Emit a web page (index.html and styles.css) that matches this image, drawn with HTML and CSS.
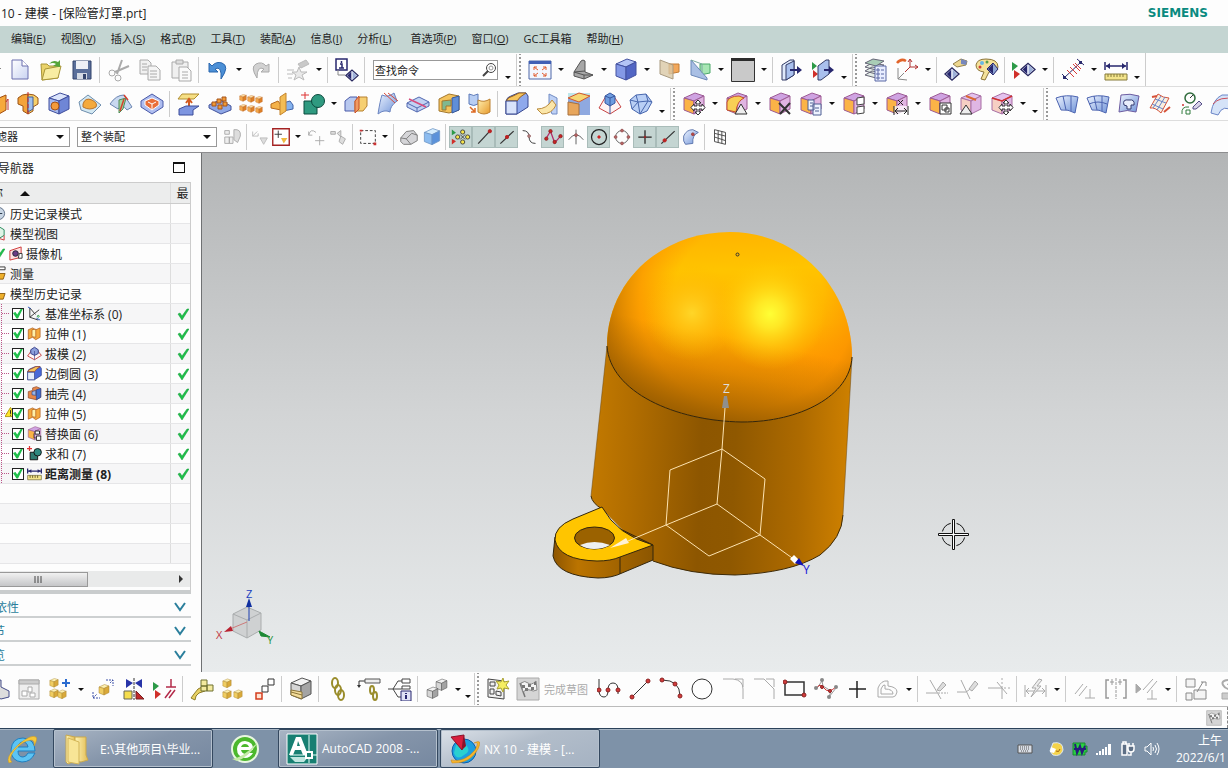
FILE: index.html
```html
<!DOCTYPE html>
<html lang="zh-CN">
<head>
  <meta charset="UTF-8" />
  <meta name="viewport" content="width=device-width, initial-scale=1.0" />
  <title>NX 10 - 建模</title>
  <link rel="stylesheet" href="styles.css">
</head>
<body>

  <!-- shared shapes and gradients -->
  <svg class="defs" aria-hidden="true">
    <defs>
      <linearGradient id="g-blue" x1="0" y1="0" x2="1" y2="1"><stop offset="0" stop-color="#eef4ff"/><stop offset="1" stop-color="#6f93d8"/></linearGradient>
      <linearGradient id="g-gold" x1="0" y1="0" x2="1" y2="1"><stop offset="0" stop-color="#fff0b0"/><stop offset="1" stop-color="#e79a2c"/></linearGradient>
      <linearGradient id="g-sheet" x1="0" y1="0" x2="1" y2="1"><stop offset="0" stop-color="#fff"/><stop offset="1" stop-color="#c9d3f2"/></linearGradient>
      <linearGradient id="g-folder" x1="0" y1="0" x2="1" y2="0"><stop offset="0" stop-color="#fdf3b4"/><stop offset="1" stop-color="#e3bd55"/></linearGradient>
    </defs>
    <symbol id="cube" viewBox="0 0 24 24">
      <path class="face-t" d="M2 6 13 1 22 4 12 9z"/>
      <path class="face-l" d="M2 6 12 9V22L2 18z"/>
      <path class="face-r" d="M12 9 22 4V17L12 22z"/>
    </symbol>
    <symbol id="tick" viewBox="0 0 12 12">
      <path d="M1 6 3 5 5 8 10 1 12 1 5 12z" fill="#1fbf4a" stroke="#0f9a35" stroke-width=".5"/>
    </symbol>
    <symbol id="move" viewBox="0 0 24 24">
      <path d="M16 8 19 11H17V14H20V12L23 15.500 20 19V17H17V20H19L16 23 13 20H15V17H12V19L9 15.500 12 12V14H15V11H13z" fill="#fff" stroke="#333"/>
    </symbol>
    <symbol id="play" viewBox="0 0 24 24">
      <path d="M2 4V13L8 8z" fill="#2c9a48" stroke="none"/>
      <path d="M4 12V21L10 16z" fill="#d0302a" stroke="none"/>
    </symbol>
    <symbol id="mark" viewBox="1 7 18 16">
      <path d="M2 15 10 8 18 15 10 22z" fill="#dfe4f5" stroke="#27275e" stroke-width="1.500"/>
      <path d="M9 10V20L4 15z" fill="#27276e" stroke="none"/>
      <path d="M11 10V20L16 15z" fill="#9db0d8" stroke="none"/>
    </symbol>
    <symbol id="flag" viewBox="0 0 24 24">
      <path d="M1 1H23V23H1z" fill="#d5d5d5" stroke="#aaa"/>
      <path d="M4 6 9 20" stroke="#777" stroke-width="1.500"/>
      <path d="M5 6Q9 3 12 6T20 4L21 13Q17 15 14 13T7 15z" fill="#f3f3f3" stroke="#888"/>
      <path d="M6 8H9V11H6zM12 7H15V10H12zM9 11H12V14H9zM15 10H18V13H15zM18 5H20V8H18z" fill="#777" stroke="none"/>
    </symbol>
    <symbol id="extrude" viewBox="0 0 24 24">
      <path d="M2 6 9 3 14 6 21 3V18L14 22 9 18 2 21z" fill="#f6a93c" stroke="#a34d10"/>
      <path d="M8 6 14 5V18L8 17z" fill="#fff0a8" stroke="#a34d10"/>
    </symbol>
  </svg>

  <header class="titlebar">
    <h1>10 - 建模 - [保险管灯罩.prt]</h1>
    <span class="brand">SIEMENS</span>
  </header>

  <nav class="menubar">
    <a href="#">编辑(<u>E</u>)</a>
    <a href="#">视图(<u>V</u>)</a>
    <a href="#">插入(<u>S</u>)</a>
    <a href="#">格式(<u>R</u>)</a>
    <a href="#">工具(<u>T</u>)</a>
    <a href="#">装配(<u>A</u>)</a>
    <a href="#">信息(<u>I</u>)</a>
    <a href="#">分析(<u>L</u>)</a>
    <a href="#" class="wide">首选项(<u>P</u>)</a>
    <a href="#">窗口(<u>O</u>)</a>
    <a href="#">GC工具箱</a>
    <a href="#">帮助(<u>H</u>)</a>
  </nav>

  <!-- standard / view toolbars -->
  <div class="toolbar standard">
    <button class="dd" aria-label="开始"></button>
    <button class="tb" aria-label="新建"><svg viewBox="0 0 24 24"><path d="M4 2H14L20 8V21H4z" fill="url(#g-sheet)" stroke="#6a6fae"/><path d="M14 2V8H20" fill="#fff" stroke="#6a6fae"/></svg></button>
    <button class="tb" aria-label="打开"><svg viewBox="0 0 24 24"><path d="M2 6H8L10 8H19V20L3 22z" fill="#ead36a" stroke="#a99638"/><path d="M6 11 22 8 19 20 3 22z" fill="#f8eda2" stroke="#a99638"/><path d="M10 6Q14 1 19 4L21 2V9L14 8 17 6Q14 4 10 6z" fill="#56a53b" stroke="none"/></svg></button>
    <button class="tb" aria-label="保存"><svg viewBox="0 0 24 24"><path d="M3 3H21V21H3z" fill="#5a6f9a" stroke="#33456d"/><path d="M6 3H18V11H6z" fill="#eef0f5"/><path d="M7 15H17V21H7z" fill="#d4dae4"/><path d="M13 16H16V21H13z" fill="#33456d"/></svg></button>
    <i class="sep"></i>
    <button class="tb" aria-label="剪切"><svg viewBox="0 0 24 24" stroke="#aaa"><path d="M15 2 10 16M22 8 8 14" stroke-width="2"/><circle cx="5" cy="15" r="3"/><circle cx="11" cy="20" r="3"/></svg></button>
    <button class="tb" aria-label="复制"><svg viewBox="0 0 24 24" stroke="#aaa"><path d="M2 2H10L13 5V16H2z" fill="#f1f1f1"/><path d="M10 8H18L22 12V22H10z" fill="#f5f5f5"/><path d="M4 6H9M4 9H9M4 12H9M12 13H19M12 16H19M12 19H19"/></svg></button>
    <button class="tb" aria-label="粘贴"><svg viewBox="0 0 24 24" stroke="#aaa"><path d="M3 4H19V20H3z" fill="#f0f0f0"/><path d="M7 2H14V6H7z" fill="#ddd"/><path d="M10 9H18L22 13V23H10z" fill="#fafafa"/><path d="M13 14H19M13 17H19M13 20H19"/></svg></button>
    <i class="sep"></i>
    <button class="tb" aria-label="撤消"><svg viewBox="0 0 24 24"><path d="M3 5V14H12L9 11Q16 7 15 21Q24 8 16 5Q10 3 6 8z" fill="#4b8fd6" stroke="#2a66ad"/></svg></button>
    <button class="dd" aria-label="撤消列表"></button>
    <button class="tb" aria-label="重做"><svg viewBox="0 0 24 24"><path d="M20 6V14H12L15 11Q8 7 8 20Q1 9 7 6Q13 3 17 8z" fill="#d2d2d2" stroke="#aaa"/></svg></button>
    <i class="sep"></i>
    <button class="tb" aria-label="重复命令"><svg viewBox="0 0 24 24" stroke="#bbb"><path d="M12 6 20 2 23 6 15 10z" fill="#c9c9c9"/><path d="M1 12H8M1 16H7M2 20H6"/><path d="M13 9 15 14 21 14 16 17 18 22 13 19 8 22 10 17 6 14H11z" fill="#e9e9e9"/></svg></button>
    <button class="dd" aria-label="重复命令列表"></button>
    <i class="sep"></i>
    <button class="tb" aria-label="命令信息"><svg viewBox="0 0 24 24"><path d="M1 1H12V12H1z" fill="#fff" stroke="#27276e" stroke-width="1.500"/><path d="M6.500 3V5M5 6H7V10M4 10H9" stroke="#27276e" stroke-width="1.500"/><path d="M3 12V17H10" stroke="#888"/><use href="#mark" x="10" y="11" width="14" height="13"/></svg></button>
    <i class="sep"></i>
    <label class="finder"><input type="text" value="查找命令" aria-label="查找命令"><svg viewBox="0 0 16 16" stroke="#444"><circle cx="10" cy="6" r="4.500"/><circle cx="10" cy="6" r="2" stroke="#999"/><path d="M7 9 2 14" stroke-width="2"/></svg></label>
    <button class="dd low" aria-label="工具条选项"></button>
    <i class="grip"></i>
    <button class="tb" aria-label="适合窗口"><svg viewBox="0 0 24 24"><path d="M1 3H23V21H1z" fill="#f3f6fd" stroke="#4c66a8"/><path d="M1 3H23V6H1z" fill="#3f5fb5" stroke="none"/><path d="M6 12V9H9M15 9H18V12M6 15V18H9M15 18H18V15M6 9 10 12M18 9 14 12M6 18 10 15M18 18 14 15" stroke="#e05a2c"/></svg></button>
    <button class="dd" aria-label="适合窗口列表"></button>
    <button class="tb" aria-label="渲染样式"><svg viewBox="0 0 24 24"><path d="M3 14 10 3Q12 1 14 3V14L22 17 13 21 3 18z" fill="#a7a7a7" stroke="#555"/><path d="M3 14 13 17 22 17M13 17V21M3 14 14 13" stroke="#555"/></svg></button>
    <button class="dd" aria-label="渲染样式列表"></button>
    <button class="tb" aria-label="定向视图"><svg viewBox="0 0 24 24" class="c-solid"><use href="#cube"/></svg></button>
    <button class="dd" aria-label="定向视图列表"></button>
    <button class="tb" aria-label="编辑截面"><svg viewBox="0 0 24 24"><path d="M12 6H22V14L12 16z" fill="#f2a75a" stroke="#c27d35"/><path d="M3 2 16 7V21L3 16z" fill="#d9c8a5" fill-opacity=".8" stroke="#a99a80"/></svg></button>
    <button class="tb" aria-label="剪切截面"><svg viewBox="0 0 24 24"><path d="M12 6H22V15L12 17z" fill="#a7e6b4" stroke="#4ba869"/><path d="M3 2 19 20V22L3 17z" fill="#a9bfe4" stroke="#6b88b8"/><path d="M3 2 14 6V15" stroke="#7aa9a0"/></svg></button>
    <button class="dd" aria-label="截面列表"></button>
    <button class="tb" aria-label="背景"><svg viewBox="0 0 24 24"><path d="M.500 .500H23.500V23.500H.500z" fill="#c9c9c9" stroke="#333"/><path d="M0 0H24V3H0z" fill="#2c2c2c" stroke="none"/></svg></button>
    <button class="dd" aria-label="背景列表"></button>
    <i class="sep"></i>
    <button class="tb" aria-label="显示"><svg viewBox="0 0 24 24"><path d="M2 7 10 2H14V17L6 22H2z" fill="#dfe9fb" stroke="#333b66"/><path d="M6 7 14 3V17L6 22z" fill="#a9c0ee" stroke="#333b66"/><path d="M10 12H18" stroke="#27276e" stroke-width="2"/><path d="M17 8 22 12 17 16z" fill="#27276e" stroke="none"/></svg></button>
    <button class="tb" aria-label="隐藏"><svg viewBox="0 0 24 24"><path d="M1 4V12L6 8z" fill="#2c9a48"/><path d="M2 12V20L7 16z" fill="#d0302a"/><path d="M7 8 15 2H18V16L10 22H7z" fill="#a9c0ee" stroke="#333b66"/><path d="M13 12H19" stroke="#27276e" stroke-width="2"/><path d="M18 8 23 12 18 16z" fill="#27276e" stroke="none"/></svg></button>
    <button class="dd low" aria-label="工具条选项"></button>
    <i class="grip"></i>
    <button class="tb" aria-label="图层设置"><svg viewBox="0 0 24 24" stroke="#667"><path d="M1 17 8 13 20 15 12 20zM1 13 8 9 20 11 12 16zM1 9 8 5 20 7 12 12z" fill="#e3ece6"/><path d="M1 5 9 1 20 3 12 8z" fill="#a9cdb6"/><path d="M11 8H22V23H11z" fill="#e8edff" stroke="#5b68a4"/><path d="M13 11H15V13H13zM13 15H15V17H13zM13 19H15V21H13zM17 12H20M17 16H20M17 20H20" stroke="#5b68a4"/></svg></button>
    <button class="tb" aria-label="工作坐标系"><svg viewBox="0 0 24 24"><path d="M2 5Q6 0 11 3" stroke="#e2652b" stroke-width="2.500"/><path d="M3 10V21L12 22M3 21 9 15" stroke="#888"/><path d="M15 2V9H23M15 9 10 14" stroke="#b03030"/><path d="M13 4 15 1 17 4M20 7 23 9 20 11" stroke="#b03030"/></svg></button>
    <button class="dd" aria-label="工作坐标系列表"></button>
    <i class="sep"></i>
    <button class="tb" aria-label="对象显示"><svg viewBox="0 0 24 24"><path d="M9 6 17 1 23 3 22 7 13 9z" fill="#edd68d" stroke="#93814d"/><path d="M17 1 23 3 22 7 17 6z" fill="#7687bd"/><use href="#mark" x="0" y="9" width="16" height="14"/></svg></button>
    <button class="tb" aria-label="编辑显示"><svg viewBox="0 0 24 24"><path d="M11 1Q23 1 23 9 22 15 14 14L10 22 6 21 9 14Q1 13 1 7 2 1 11 1z" fill="#f5e29a" stroke="#8b7437"/><circle cx="7" cy="5" r="2" fill="#68b8e6"/><circle cx="12" cy="4" r="1.500" fill="#5b9c4a"/><circle cx="5" cy="9" r="1.500" fill="#cf4035"/><path d="M18 5 23 11 18 17 12 11z" fill="#8fa6d4" stroke="#27276e"/><path d="M18 6V16L13 11z" fill="#27276e"/></svg></button>
    <i class="sep"></i>
    <button class="tb" aria-label="隐藏显示"><svg viewBox="0 0 24 24"><use href="#play" x="-2"/><use href="#mark" x="8" y="4" width="16" height="15"/></svg></button>
    <button class="dd" aria-label="隐藏显示列表"></button>
    <i class="sep"></i>
    <button class="tb" aria-label="测量距离"><svg viewBox="0 0 24 24"><path d="M3 20 20 4" stroke="#2b2b6e"/><path d="M6 12 13 19M9 9 16 16M12 6 19 13M14 5 20 11" stroke="#d83a3a"/><path d="M1 16 7 22M16 1 23 7" stroke="#2b2b6e"/><path d="M2 18H5V21H2zM18 3H21V6H18z" fill="#2b2b6e" stroke="none"/></svg></button>
    <button class="dd" aria-label="测量列表"></button>
    <button class="tb" aria-label="尺"><svg viewBox="0 0 24 24"><path d="M1 4V12M23 4V12M2 8H22" stroke="#27276e" stroke-width="1.500"/><path d="M2 8 6 5V11zM22 8 18 5V11z" fill="#27276e" stroke="none"/><path d="M1 16H23V22H1z" fill="#f3e48b" stroke="#857b3a"/><path d="M4 16V19M7 16V19M10 16V19M13 16V19M16 16V19M19 16V19" stroke="#857b3a"/></svg></button>
    <button class="dd low" aria-label="工具条选项"></button>
    <i class="edge"></i>
  </div>

  <!-- feature / synchronous modelling toolbars -->
  <div class="toolbar feature">
    <button class="tb" aria-label="拉伸"><svg viewBox="0 0 24 24"><use href="#extrude"/><path d="M23 7V18M21 10 23 7" stroke="#c03030"/></svg></button>
    <button class="tb" aria-label="旋转"><svg viewBox="0 0 24 24"><path d="M2 6Q6 2 12 2V22L7 19V14L2 12z" fill="#f3a33a" stroke="#9a5518"/><path d="M12 2Q19 2 22 6V12L17 15V19L12 22z" fill="#f6d06a" stroke="#9a5518"/><path d="M12 5H17V17L12 20z" fill="#9fc0ee" stroke="#455d94"/><path d="M12 0V24" stroke="#c33" stroke-dasharray="4 2"/></svg></button>
    <button class="tb" aria-label="孔"><svg viewBox="0 0 24 24" class="c-blue"><use href="#cube"/><circle cx="8" cy="14" r="4" fill="#f39b3b" stroke="#a2521a"/></svg></button>
    <button class="tb" aria-label="凸起"><svg viewBox="0 0 24 24"><path d="M1 10 10 3 23 13 14 22 3 18z" fill="#d3e8f2" stroke="#6f8fae"/><path d="M5 12Q7 5 14 8 20 11 18 15 12 19 5 15z" fill="#f4aa3c" stroke="#b7732c"/></svg></button>
    <button class="tb" aria-label="规律延伸"><svg viewBox="0 0 24 24"><path d="M1 12Q7 3 15 3L23 15 18 18Q13 11 9 17z" fill="#c8d8f0" stroke="#6b85b1"/><path d="M10 8 17 6 14 17 10 21z" fill="#a4d3a0" stroke="#4e8c58"/><path d="M15 3 19 8M11 19 15 7" stroke="#d6402f" stroke-width="1.500"/></svg></button>
    <button class="tb" aria-label="凸台"><svg viewBox="0 0 24 24"><path d="M1 9 12 2 23 9V15L12 22 1 15z" fill="#aebdf0" stroke="#4a5aa8"/><path d="M5 9 12 6 19 9V13L12 18 5 13z" fill="#ea6f3a" stroke="#fff"/><path d="M8 10 12 12 16 10M12 12V17" stroke="#fff"/></svg></button>
    <i class="sep"></i>
    <button class="tb" aria-label="抽取几何体"><svg viewBox="0 0 24 24"><path d="M5 2H22L17 7H1z" fill="#f6df84" stroke="#b08e31"/><path d="M12 17V8M9 11 12 7 15 11" stroke="#d35a1e" stroke-width="2"/><path d="M2 17 9 14H22L16 18V23H2z" fill="#7e95e0" stroke="#3d4d9a"/></svg></button>
    <button class="tb" aria-label="阵列特征"><svg viewBox="0 0 24 24"><path d="M1 13 12 8 23 14V18L13 22 1 16z" fill="#8ea7e6" stroke="#44549c"/><path d="M4 10H8V14H4zM9 7H13V11H9zM14 5H18V9H14zM10 13H14V17H10zM15 10H19V14H15z" fill="#f29a35" stroke="#a4551d"/></svg></button>
    <button class="tb" aria-label="阵列几何"><svg viewBox="0 0 24 24" class="c-gold"><use href="#cube" x="0" y="2" width="8" height="8"/><use href="#cube" x="8" y="3" width="8" height="8"/><use href="#cube" x="16" y="4" width="8" height="8"/><use href="#cube" x="0" y="12" width="8" height="8"/><use href="#cube" x="8" y="13" width="8" height="8"/><use href="#cube" x="16" y="14" width="8" height="8"/></svg></button>
    <button class="tb" aria-label="镜像特征"><svg viewBox="0 0 24 24"><path d="M1 12 8 9 11 13V18L1 16z" fill="#f4b24a" stroke="#b56a1e"/><path d="M13 11 20 9 23 13V17L13 19z" fill="#86b3ee" stroke="#3f62a8"/><path d="M10 5 16 1V19L10 23z" fill="#f3bd55" stroke="#c4832a"/></svg></button>
    <button class="tb" aria-label="求和"><svg viewBox="0 0 24 24" stroke="#0d4a3e"><path d="M4 0V7M0 3H8" stroke="#d33"/><path d="M3 9H16V22H3z" fill="#2f9a80"/><circle cx="17" cy="9" r="6.500" fill="#2f9a80"/></svg></button>
    <button class="dd" aria-label="求和列表"></button>
    <button class="tb" aria-label="修剪体"><svg viewBox="0 0 24 24"><path d="M1 9 6 5H13V19H1z" fill="#b8c8ef" stroke="#4a5aa8"/><path d="M11 9 16 5H23V14L19 19H11z" fill="#f6cf72" stroke="#b78130"/><path d="M11 9V21L15 17V4z" fill="#f09a62" stroke="#c7522b"/></svg></button>
    <button class="tb" aria-label="拆分体"><svg viewBox="0 0 24 24"><path d="M7 3Q13 6 19 1L22 9Q15 14 15 20 9 17 3 22 5 9 7 3z" fill="url(#g-blue)" stroke="#6b85c1"/><path d="M9 1 20 11M13 1 23 9" stroke="#d64b3d"/></svg></button>
    <button class="tb" aria-label="修剪片体"><svg viewBox="0 0 24 24"><path d="M1 11 13 5 23 10V14L11 20 1 15z" fill="#c1d2f3" stroke="#5268b0"/><path d="M1 11 11 16 23 10M11 16V20" stroke="#5268b0"/><path d="M3 7 20 15" stroke="#d64b7d" stroke-width="1.500"/></svg></button>
    <button class="tb" aria-label="抽壳"><svg viewBox="0 0 24 24"><path d="M2 7 12 2 22 4V18L12 21 2 19z" fill="#f4c35c" stroke="#a3782e"/><path d="M15 6 22 4V18L15 21z" fill="#5f8ed8" stroke="#34589e"/><path d="M5 9 14 8V14L9 14V18H5z" fill="#7fb890" stroke="#a3782e"/></svg></button>
    <button class="tb" aria-label="加厚"><svg viewBox="0 0 24 24"><path d="M1 2Q6 5 10 2V12Q6 15 1 12z" fill="#b7cdf3" stroke="#5b78b8"/><path d="M10 8Q16 11 22 7V20Q16 24 10 20z" fill="url(#g-gold)" stroke="#bd8130"/><path d="M2 15 7 20M7 16V20H3" stroke="#dd6b25" stroke-width="1.500"/></svg></button>
    <i class="sep"></i>
    <button class="tb" aria-label="边倒圆"><svg viewBox="0 0 24 24"><path d="M1 9Q2 5 6 4L13 1H21L23 4V15L12 22H1z" fill="#8fa9ec" stroke="#37478f"/><path d="M1 9Q3 5 8 4L14 1H21Q14 5 12 9z" fill="#f6c55c" stroke="#99601c"/><path d="M1 9H12V22H1z" fill="#d8e3fb" stroke="#37478f"/></svg></button>
    <button class="tb" aria-label="面倒圆"><svg viewBox="0 0 24 24"><path d="M13 2 21 6V22H16L13 14z" fill="#bdd0f5" stroke="#728cc4"/><path d="M1 17Q11 17 16 8L20 13Q16 22 6 22z" fill="#fbe6a8" stroke="#bb8b3c"/></svg></button>
    <button class="tb" aria-label="倒斜角"><svg viewBox="0 0 24 24"><path d="M1 1H23V23H1z" fill="#bfe7ea" stroke="none"/><path d="M1 7 10 2 23 5V23H1z" fill="#8fa9e0" stroke="none"/><path d="M1 6 12 1 23 4 12 10z" fill="#f6d774" stroke="#d2562f"/><path d="M1 10 12 12V23H1z" fill="#e8a65c" stroke="#a8713c"/></svg></button>
    <button class="tb" aria-label="拔模"><svg viewBox="0 0 24 24"><path d="M8 4 1 16 12 22 23 15 15 3" fill="#fff4f4" stroke="#c74545"/><path d="M7 4 12 1 17 4V11L12 14 7 11z" fill="#6f9de0" stroke="#3858a0"/><path d="M7 4 12 6 17 4M12 6V22" stroke="#3858a0"/></svg></button>
    <button class="tb" aria-label="体"><svg viewBox="0 0 24 24"><path d="M7 3 17 2 23 10 18 19 11 22 3 17 1 8z" fill="#b9cff5" stroke="#4867ae"/><path d="M7 3 9 10 1 8M9 10 19 9 17 2M19 9 23 10M9 10 11 22 19 9M3 17 9 10" stroke="#4867ae"/></svg></button>
    <button class="dd low" aria-label="工具条选项"></button>
    <i class="grip"></i>
    <button class="tb" aria-label="移动面"><svg viewBox="0 0 24 24" class="c-sync"><use href="#cube"/><use href="#move"/></svg></button>
    <button class="dd" aria-label="移动面列表"></button>
    <button class="tb" aria-label="调整圆角"><svg viewBox="0 0 24 24" class="c-sync"><use href="#cube"/><path d="M2 18V10Q4 4 14 4L19 6Q12 9 11 20z" fill="#f8cf55" stroke="#c4502f"/><path d="M16 12 22 22H10z" fill="#eee" stroke="#333"/></svg></button>
    <button class="dd" aria-label="调整圆角列表"></button>
    <button class="tb" aria-label="删除面"><svg viewBox="0 0 24 24" class="c-sync"><use href="#cube"/><path d="M11 11 22 22M22 11 12 22" stroke="#333" stroke-width="2"/></svg></button>
    <button class="tb" aria-label="复制面"><svg viewBox="0 0 24 24" class="c-sync"><use href="#cube"/><path d="M9 8H15V18H9zM14 12H22V23H14z" fill="#eef3ff" stroke="#4e5e93"/><path d="M11 11H14M11 14H14M16 16H20M16 19H20" stroke="#4e5e93"/></svg></button>
    <button class="dd" aria-label="复制面列表"></button>
    <button class="tb" aria-label="组合面"><svg viewBox="0 0 24 24" class="c-sync"><use href="#cube"/><path d="M15 6 22 5V12L15 13zM15 15 22 14V21L15 22z" fill="#fff" stroke="#444"/></svg></button>
    <button class="dd" aria-label="组合面列表"></button>
    <button class="tb" aria-label="线性尺寸"><svg viewBox="0 0 24 24" class="c-sync"><use href="#cube"/><path d="M9 14H24V24H9z" fill="#fff" fill-opacity=".7"/><path d="M9 14V23M23 14V23M10 19H22M13 16 10 19 13 22M19 16 22 19 19 22" stroke="#222"/><path d="M13 8 18 13M18 8 13 13" stroke="#222"/></svg></button>
    <button class="dd" aria-label="线性尺寸列表"></button>
    <button class="tb" aria-label="组"><svg viewBox="0 0 24 24" class="c-sync"><use href="#cube"/><path d="M12 11H23V22H12z" fill="#fff" stroke="#333"/><path d="M14 13H19V18H14zM17 16H21V20H17z" stroke="#333"/></svg></button>
    <button class="tb" aria-label="优化面"><svg viewBox="0 0 24 24" class="c-pink"><use href="#cube"/><path d="M7 4 17 8" stroke="#db6a34" stroke-width="2"/><path d="M7 13 13 22H1z" fill="#eee" stroke="#333"/></svg></button>
    <button class="tb" aria-label="移动边"><svg viewBox="0 0 24 24" class="c-pink"><use href="#cube"/><path d="M2 6 12 9 22 4" stroke="#d03131" stroke-width="1.500"/><use href="#move"/></svg></button>
    <button class="dd" aria-label="移动边列表"></button>
    <button class="dd low" aria-label="工具条选项"></button>
    <i class="grip"></i>
    <button class="tb" aria-label="通过曲线组"><svg viewBox="0 0 24 24"><path d="M1 6Q11 2 23 5L20 21Q13 17 6 18z" fill="url(#g-blue)" stroke="#4b63b0"/><path d="M8 4 11 18M16 4V19" stroke="#4b63b0"/></svg></button>
    <button class="tb" aria-label="通过曲线网格"><svg viewBox="0 0 24 24"><path d="M1 6Q11 2 23 5L20 21Q13 17 6 18z" fill="url(#g-blue)" stroke="#4b63b0"/><path d="M8 4 11 18M16 4V19M3 12Q12 8 21 12" stroke="#4b63b0"/></svg></button>
    <button class="tb" aria-label="N边曲面"><svg viewBox="0 0 24 24"><path d="M4 3Q13 1 22 4L19 20Q10 17 2 20z" fill="url(#g-blue)" stroke="#6b5ba0"/><path d="M7 13Q5 7 12 8 18 7 17 13L14 13V17H10V14z" fill="#e9eefc" stroke="#333a70"/></svg></button>
    <button class="tb" aria-label="X型"><svg viewBox="0 0 24 24"><path d="M10 2Q15 6 21 6L13 21Q7 15 2 16z" fill="#f7efe2" stroke="#d6533a"/><path d="M13 4 5 16M17 5 9 18M7 7 18 11M4 12 15 17" stroke="#6b86c8"/><path d="M4 5 9 4M16 20 22 15" stroke="#d6533a" stroke-width="2"/></svg></button>
    <button class="tb" aria-label="扩大"><svg viewBox="0 0 24 24"><circle cx="11" cy="6" r="5" stroke="#2f6b3c" stroke-width="1.500"/><path d="M11 6 14 3" stroke="#333"/><path d="M3 22Q2 14 10 15M7 18H11V22H7z" stroke="#2f7b3c"/><path d="M14 15 20 9 23 12 17 17H14z" fill="#d9d3ea" stroke="#544c86"/><circle cx="4" cy="13" r="1" fill="#c33"/></svg></button>
    <button class="tb" aria-label="曲面"><svg viewBox="0 0 24 24"><path d="M1 21Q3 7 12 3H24V20Q13 11 8 23z" fill="#d5e3f8" stroke="#6b86c8"/><path d="M3 12Q10 4 24 7" stroke="#cb4e5a"/></svg></button>
  </div>

  <!-- selection bar -->
  <div class="toolbar selection">
    <span class="combo filter"><select aria-label="类型过滤器"><option>滤器</option></select></span>
    <span class="combo scope"><select aria-label="选择范围"><option>整个装配</option></select></span>
    <button class="tb" aria-label="仅在工作部件"><svg viewBox="0 0 24 24" stroke="#aaa"><path d="M3 5H8V9H3zM3 12H8V19H3zM8 12H12V19H8z" fill="#eee"/><path d="M13 4Q21 3 20 11L17 18 13 15z" fill="#ddd"/></svg></button>
    <i class="sep"></i>
    <button class="tb slim" aria-label="选择优先级"><svg viewBox="0 0 24 24" stroke="#bbb"><path d="M4 6V11H10V8M4 11 9 6"/><path d="M12 13H20L16 20z" fill="#ddd"/></svg></button>
    <button class="tb" aria-label="常规选择过滤器"><svg viewBox="0 0 24 24"><path d="M3 3H21V21H3z" fill="#fff" stroke="#a42222" stroke-width="1.500"/><path d="M9 5V13M5 9H13" stroke="#333"/><path d="M12 13H19L15 19z" fill="#f0b93f" stroke="none"/></svg></button>
    <button class="dd" aria-label="过滤器列表"></button>
    <button class="tb" aria-label="取消选择"><svg viewBox="0 0 24 24" stroke="#aaa"><path d="M4 10Q6 2 12 7M4 6V10H8M16 11V21M11 16H21"/></svg></button>
    <button class="tb" aria-label="全部选择"><svg viewBox="0 0 24 24" stroke="#aaa"><path d="M3 6H8V9H3zM10 8 14 5V12zM14 11 19 14 16 20 12 17z" fill="#ddd"/></svg></button>
    <i class="sep"></i>
    <button class="tb" aria-label="矩形选择"><svg viewBox="0 0 24 24"><path d="M4 5H20V19H4z" stroke="#333" stroke-dasharray="3 2"/><path d="M3 4H6V6H3zM18 18H21V21H18z" fill="#c33" stroke="none"/></svg></button>
    <button class="dd" aria-label="选择方式列表"></button>
    <i class="sep"></i>
    <button class="tb" aria-label="隐藏边"><svg viewBox="0 0 24 24"><path d="M3 13 9 6 17 5 21 10V16L14 20H6L3 17z" fill="#d5d5d8" stroke="#777"/><path d="M3 13 9 14 14 20M9 14 15 8 21 10" stroke="#777"/></svg></button>
    <button class="tb" aria-label="着色"><svg viewBox="0 0 24 24" class="c-sky"><use href="#cube" x="2" y="2" width="20" height="20"/></svg></button>
    <i class="sep"></i>
    <button class="tb on" aria-label="启用捕捉点"><svg viewBox="0 0 24 24"><path d="M1 3V10L6 7z" fill="#2c9a48"/><path d="M1 14V21L6 17z" fill="#d0302a"/><g fill="#f5e34a" stroke="#333"><circle cx="14" cy="6" r="2.500"/><circle cx="8" cy="12" r="2.500"/><circle cx="20" cy="12" r="2.500"/><circle cx="14" cy="18" r="2.500"/></g><path d="M11 9 17 15M17 9 11 15" stroke="#333"/></svg></button>
    <button class="tb on" aria-label="端点"><svg viewBox="0 0 24 24"><path d="M5 20 19 5" stroke="#333" stroke-width="1.500"/><circle cx="19" cy="5" r="2" fill="#b22" stroke="#b22"/></svg></button>
    <button class="tb on" aria-label="中点"><svg viewBox="0 0 24 24"><path d="M4 20 20 5" stroke="#333" stroke-width="1.500"/><circle cx="12" cy="12" r="2" fill="#b22" stroke="#b22"/></svg></button>
    <button class="tb" aria-label="控制点"><svg viewBox="0 0 24 24"><path d="M4 5Q11 5 11 12T18 19" stroke="#333"/><circle cx="11" cy="11" r="1.500" fill="#b88" stroke="#966"/></svg></button>
    <button class="tb on" aria-label="交点样条"><svg viewBox="0 0 24 24"><path d="M3 15 9 5 14 19 21 11" stroke="#b22a68" stroke-width="1.500"/><g fill="#c22" stroke="#822"><circle cx="4" cy="14" r="2"/><circle cx="9" cy="5" r="2"/><circle cx="14" cy="18" r="2"/><circle cx="21" cy="11" r="2"/></g></svg></button>
    <button class="tb" aria-label="交点"><svg viewBox="0 0 24 24"><path d="M12 4V20M4 15Q12 4 20 15" stroke="#555"/><circle cx="12" cy="10" r="1.500" fill="#b66" stroke="#955"/></svg></button>
    <button class="tb on" aria-label="圆心"><svg viewBox="0 0 24 24"><circle cx="12" cy="12" r="9" stroke="#222" stroke-width="1.500"/><circle cx="12" cy="12" r="1.500" fill="#c22" stroke="#c22"/></svg></button>
    <button class="tb" aria-label="象限点"><svg viewBox="0 0 24 24"><circle cx="12" cy="12" r="7" stroke="#555"/><g fill="#b66" stroke="#955"><circle cx="12" cy="5" r="1.500"/><circle cx="5" cy="12" r="1.500"/><circle cx="19" cy="12" r="1.500"/><circle cx="12" cy="19" r="1.500"/></g></svg></button>
    <button class="tb on" aria-label="现有点"><svg viewBox="0 0 24 24"><path d="M12 4V20M4 12H20" stroke="#222" stroke-width="1.500"/><circle cx="12" cy="12" r="1" stroke="#b22"/></svg></button>
    <button class="tb on" aria-label="曲线上的点"><svg viewBox="0 0 24 24"><path d="M4 20 20 5" stroke="#333" stroke-width="1.500"/><circle cx="8" cy="16" r="2" fill="#b22" stroke="#b22"/></svg></button>
    <button class="tb" aria-label="面上的点"><svg viewBox="0 0 24 24"><path d="M4 11Q7 4 14 4L20 7Q13 10 14 19L6 20Q3 17 4 11z" fill="url(#g-blue)" stroke="#5871aa"/><circle cx="14" cy="9" r="1.500" fill="#b44" stroke="#944"/></svg></button>
    <i class="sep"></i>
    <button class="tb" aria-label="栅格点"><svg viewBox="0 0 24 24"><path d="M6 4 18 7V20L6 17zM10 5V18M14 6V19M6 8 18 11M6 12 18 16" stroke="#444"/></svg></button>
  </div>

  <main class="workspace">
    <aside class="navigator">
      <div class="nav-title"><h2>导航器</h2><button class="pin" aria-label="最大化"></button></div>
      <div class="tree">
        <table>
          <thead><tr><th><span class="col-name">称</span><i class="sort"></i></th><th>最</th></tr></thead>
          <tbody>
            <tr><td><div class="node top"><svg viewBox="0 0 16 16"><circle cx="8" cy="8" r="6.500" fill="#c9d6e4" stroke="#5d6d84"/><path d="M8 4V8H12" stroke="#234"/></svg>历史记录模式</div></td><td></td></tr>
            <tr><td><div class="node top"><svg viewBox="0 0 16 16"><path d="M4 4 9 1 14 4V10L9 13 4 10z" fill="#dff3e6" stroke="#24895a"/><path d="M8 13 14 15V10" stroke="#c33"/></svg>模型视图</div></td><td></td></tr>
            <tr><td><div class="node cam"><svg viewBox="0 0 12 12"><use href="#tick"/></svg><svg viewBox="0 0 16 16"><path d="M2 5 14 1V12L2 15z" fill="#ffe3e3" stroke="#c33"/><circle cx="8" cy="8" r="3" fill="#6a3e86" stroke="#223"/><path d="M12 8H15V13H11z" fill="#fff" stroke="#333"/></svg>摄像机</div></td><td></td></tr>
            <tr><td><div class="node top"><svg viewBox="0 0 16 16"><path d="M8 1H15V4H8z" fill="#fff" stroke="#333"/><path d="M1 6H8L9 8H15L13 14H1z" fill="#eeb02c" stroke="#8e5e12"/></svg>测量</div></td><td></td></tr>
            <tr><td><div class="node top"><svg viewBox="0 0 16 16"><path d="M1 5H8L9 8H15L13 14H1z" fill="#eeb02c" stroke="#8e5e12"/></svg>模型历史记录</div></td><td></td></tr>
            <tr><td><label class="node leaf"><input type="checkbox" checked><svg viewBox="0 0 16 16"><path d="M3 2V12L12 15M3 12 13 4M3 2 9 9" stroke="#333"/><path d="M1 1 4 3M10 13 14 15" stroke="#2a58c0"/><circle cx="12" cy="11" r="1" stroke="#2c9a48"/></svg>基准坐标系 (0)</label></td><td><svg class="ok"><use href="#tick"/></svg></td></tr>
            <tr><td><label class="node leaf"><input type="checkbox" checked><svg viewBox="0 0 24 24"><use href="#extrude"/></svg>拉伸 (1)</label></td><td><svg class="ok"><use href="#tick"/></svg></td></tr>
            <tr><td><label class="node leaf"><input type="checkbox" checked><svg viewBox="0 0 24 24"><path d="M8 6 1 16 12 22 23 15 15 5" fill="#fff4f4" stroke="#c74545" stroke-width="1.500"/><path d="M6 6 12 2 18 6V12L12 15 6 12z" fill="#8c9fdc" stroke="#333b86" stroke-width="1.500"/><path d="M12 8V22" stroke="#333b86"/></svg>拔模 (2)</label></td><td><svg class="ok"><use href="#tick"/></svg></td></tr>
            <tr><td><label class="node leaf"><input type="checkbox" checked><svg viewBox="0 0 24 24"><path d="M1 9Q2 5 6 4L13 1H21L23 4V15L12 22H1z" fill="#4868d8" stroke="#27377f"/><path d="M1 9Q3 5 8 4L14 1H21Q14 5 12 9z" fill="#f6c55c" stroke="#99301c"/><path d="M1 10H12V22H1z" fill="#e5ecfb" stroke="#27377f"/></svg>边倒圆 (3)</label></td><td><svg class="ok"><use href="#tick"/></svg></td></tr>
            <tr><td><label class="node leaf"><input type="checkbox" checked><svg viewBox="0 0 24 24"><path d="M2 9 9 7V3L15 1 22 4V18L15 22 2 19z" fill="#e78747" stroke="#84381a"/><path d="M15 6 22 4V18L15 22z" fill="#3f6ed0" stroke="#243f8a"/><path d="M8 9 14 7V15L8 14z" fill="#9bb7e8" stroke="#243f8a"/></svg>抽壳 (4)</label></td><td><svg class="ok"><use href="#tick"/></svg></td></tr>
            <tr><td><label class="node leaf warn"><svg class="alert" viewBox="0 0 12 12"><path d="M6 1 12 11H0z" fill="#ffe42c" stroke="#b09a10"/><path d="M6 4V8M6 9V10" stroke="#222"/></svg><input type="checkbox" checked><svg viewBox="0 0 24 24"><use href="#extrude"/></svg>拉伸 (5)</label></td><td><svg class="ok"><use href="#tick"/></svg></td></tr>
            <tr><td><label class="node leaf"><input type="checkbox" checked><svg viewBox="0 0 24 24" class="c-sync"><use href="#cube"/><path d="M13 8H20V13H13zM15 16H22V23H15z" fill="#fff" stroke="#222" stroke-width="1.500"/><path d="M11 12V19H15" stroke="#222"/></svg>替换面 (6)</label></td><td><svg class="ok"><use href="#tick"/></svg></td></tr>
            <tr><td><label class="node leaf"><input type="checkbox" checked><svg viewBox="0 0 24 24" stroke="#111"><path d="M4 0V8M0 4H8" stroke="#d33" stroke-width="2"/><path d="M5 10H17V22H5z" fill="#2f7a70" stroke-width="1.500"/><circle cx="17" cy="10" r="6" fill="#2f8a80" stroke-width="1.500"/></svg>求和 (7)</label></td><td><svg class="ok"><use href="#tick"/></svg></td></tr>
            <tr><td><label class="node leaf bold"><input type="checkbox" checked><svg viewBox="0 0 24 24"><path d="M1 4V12M23 4V12M2 8H22" stroke="#27276e" stroke-width="2"/><path d="M2 8 7 5V11zM22 8 17 5V11z" fill="#27276e"/><path d="M1 15H23V22H1z" fill="#f3e48b" stroke="#655b2a"/><path d="M5 15V19M9 15V19M13 15V19M17 15V19" stroke="#655b2a" stroke-width="1.500"/></svg>距离测量 (8)</label></td><td><svg class="ok"><use href="#tick"/></svg></td></tr>
            <tr><td></td><td></td></tr>
            <tr><td></td><td></td></tr>
            <tr><td></td><td></td></tr>
            <tr><td></td><td></td></tr>
          </tbody>
        </table>
        <div class="hscroll"><div class="thumb"><svg viewBox="0 0 9 7"><path d="M1 0V7M4 0V7M7 0V7" stroke="#444"/></svg></div><i class="right"></i></div>
      </div>
      <div class="sections">
        <button class="section"><span>依性</span><svg viewBox="0 0 12 12"><path d="M1 2 6 9 11 2"/></svg></button>
        <button class="section short"><span>节</span><svg viewBox="0 0 12 12"><path d="M1 2 6 9 11 2"/></svg></button>
        <button class="section short"><span>览</span><svg viewBox="0 0 12 12"><path d="M1 2 6 9 11 2"/></svg></button>
      </div>
    </aside>

    <section class="viewport">
      <svg viewBox="202 153 1026 519" role="img" aria-label="保险管灯罩">
        <defs>
          <linearGradient id="wall" gradientUnits="userSpaceOnUse" x1="592" y1="470" x2="850" y2="480">
            <stop offset="0" stop-color="#c27900"/><stop offset=".15" stop-color="#b16d00"/><stop offset=".42" stop-color="#8d5600"/><stop offset=".55" stop-color="#8f5800"/><stop offset=".8" stop-color="#ad6a00"/><stop offset="1" stop-color="#cf8100"/>
          </linearGradient>
          <linearGradient id="dome" gradientUnits="userSpaceOnUse" x1="730" y1="232" x2="738" y2="422">
            <stop offset="0" stop-color="#ffb400"/><stop offset=".2" stop-color="#ffc400"/><stop offset=".5" stop-color="#ffb000"/><stop offset=".7" stop-color="#ff9a00"/><stop offset="1" stop-color="#ee8e00"/>
          </linearGradient>
          <radialGradient id="rim" gradientUnits="userSpaceOnUse" cx="748" cy="300" r="150">
            <stop offset=".5" stop-color="#ff9500" stop-opacity="0"/><stop offset=".72" stop-color="#fb9300" stop-opacity=".7"/><stop offset="1" stop-color="#b46c00"/>
          </radialGradient>
          <linearGradient id="lower" gradientUnits="userSpaceOnUse" x1="745" y1="340" x2="728" y2="424">
            <stop offset="0" stop-color="#a06200" stop-opacity="0"/><stop offset=".4" stop-color="#a06200" stop-opacity=".3"/><stop offset="1" stop-color="#945a00" stop-opacity=".9"/>
          </linearGradient>
          <radialGradient id="shine1" gradientUnits="userSpaceOnUse" cx="770" cy="314" r="56">
            <stop offset="0" stop-color="#ffff35"/><stop offset=".25" stop-color="#fff22c" stop-opacity=".85"/><stop offset="1" stop-color="#ffc800" stop-opacity="0"/>
          </radialGradient>
          <radialGradient id="shine2" gradientUnits="userSpaceOnUse" cx="692" cy="313" r="48">
            <stop offset="0" stop-color="#ffd628"/><stop offset="1" stop-color="#ffb400" stop-opacity="0"/>
          </radialGradient>
          <linearGradient id="lugside" x1="0" y1="0" x2="1" y2="0"><stop offset="0" stop-color="#8d5500"/><stop offset=".25" stop-color="#bb7400"/><stop offset="1" stop-color="#8c5600"/></linearGradient>
        </defs>

        <path d="M607 346 591 496Q592 503 602 509L653 561Q690 575 735 575 790 573 820 555 842 538 843 515L852 357z" fill="url(#wall)"/>
        <path d="M591 496Q592 503 602 509M653 561Q690 575 735 575 790 573 820 555 842 538 843 515" stroke="#3d2a08"/>
        <path d="M607 346 591 496M852 357 843 515" stroke="#6b4711" stroke-width=".5"/>
        <path d="M607 346C607 282 660 232 730 232 800 232 852 290 852 357 850 396 800 422 742 422 675 421 610 392 607 346z" fill="url(#dome)"/>
        <path d="M607 346C607 282 660 232 730 232 800 232 852 290 852 357 850 396 800 422 742 422 675 421 610 392 607 346z" fill="url(#rim)"/>
        <path d="M607 346C607 282 660 232 730 232 800 232 852 290 852 357 850 396 800 422 742 422 675 421 610 392 607 346z" fill="url(#lower)"/>
        <circle cx="692" cy="313" r="48" fill="url(#shine2)"/>
        <circle cx="770" cy="314" r="56" fill="url(#shine1)"/>
        <path d="M607 346C610 392 675 421 742 422 800 422 850 396 852 357" stroke="#33260d"/>
        <circle cx="737.500" cy="254.500" r="1.500" stroke="#333"/>

        <path d="M555 537 553 556Q557 576 598 578 612 578 622 573L653 560V545L602 520z" fill="url(#lugside)" stroke="#33260d"/>
        <path d="M602 507 573 519Q554 527 555 540 559 560 597 561 611 561 620 557L653 545Q617 535 602 507z" fill="#ffc500" stroke="#33260d"/>
        <path d="M620 557V574" stroke="#33260d"/>
        <ellipse cx="594.500" cy="538" rx="20" ry="11" fill="#9b6200" stroke="#33260d"/>
        <path d="M580 545Q594 539 610 545 603 549 594 549 586 549 580 545z" fill="#eef0f1"/>

        <path d="M722 449 765 479 760 535 709 556 666 525 670 470zM717 504 722 449 725 408M717 504 666 525 628 541M717 504 760 535 795 560" stroke="#fde3b0"/>
        <path d="M722 408 724 396H727L729 408z" fill="#8f8f8f"/>
        <path d="M610 548 626 538 629 543z" fill="#fff2d6"/>
        <path d="M790 559 794 555 799 560 795 564z" fill="#fff"/>
        <path d="M795 563 799 558 804 566z" fill="#1111b5"/>
        <text x="723" y="393" fill="#ddd" font-size="12">Z</text>
        <text x="803" y="574" fill="#1414d8" font-size="12">Y</text>

        <!-- view triad -->
        <path d="M233 614 247 607 261 613V630L247 638 233 631z" fill="#cfd1d2" stroke="#aaadae"/>
        <path d="M233 614 247 620 261 613M247 620V638" stroke="#aaadae"/>
        <path d="M249 621V606" stroke="#1d3fb0"/><path d="M246 607 249 598 252 607z" fill="#1030a0"/>
        <path d="M247 622 230 629" stroke="#cc7a7a"/><path d="M224 632 231 626 233 631z" fill="#b92230"/>
        <path d="M259 631 270 637 261 636z" fill="#1d8a35" stroke="#1d8a35"/>
        <text x="246" y="598" fill="#2040c0" font-size="11">Z</text>
        <text x="216" y="639" fill="#c03a45" font-size="11">X</text>
        <text x="267" y="644" fill="#2c9545" font-size="11">Y</text>

        <!-- pick cursor -->
        <circle cx="953.500" cy="534.500" r="11.500" stroke="#111" stroke-dasharray="12 6" stroke-dashoffset="-3"/>
        <path d="M952.500 519.500H954.500V533.500H968.500V535.500H954.500V549.500H952.500V535.500H938.500V533.500H952.500z" fill="#fff" stroke="#111"/>
      </svg>
    </section>
  </main>

  <!-- assembly / sketch toolbars -->
  <div class="toolbar assembly">
    <button class="tb" aria-label="组件"><svg viewBox="0 0 24 24"><path d="M9 4 15 3V10L23 14V20L15 22 9 19z" fill="#ddd" stroke="#444c88"/></svg></button>
    <button class="tb" aria-label="新建组件"><svg viewBox="0 0 24 24" stroke="#aaa"><path d="M2 3H22V22H2z" fill="#eee"/><path d="M2 3H22V7H2z" fill="#ccc"/><path d="M5 14H10V19H5zM11 10H15V15H11zM13 16H18V20H13z" fill="#fff"/></svg></button>
    <button class="tb" aria-label="添加组件"><svg viewBox="0 0 24 24" class="c-yellow"><use href="#cube" x="1" y="1" width="10" height="10"/><use href="#cube" x="1" y="11" width="10" height="11"/><use href="#cube" x="9" y="12" width="10" height="11"/><path d="M18 2V10M14 6H22" stroke="#2c6cd0" stroke-width="2"/></svg></button>
    <button class="dd" aria-label="添加组件列表"></button>
    <button class="tb" aria-label="移动组件"><svg viewBox="0 0 24 24" class="c-yellow"><use href="#cube" x="7" y="7" width="12" height="12"/><path d="M15 3H22V9M22 3 19 6M2 15V21H9M2 21 6 17" stroke="#3a4ea8" stroke-dasharray="2 1"/></svg></button>
    <button class="tb" aria-label="镜像装配"><svg viewBox="0 0 24 24"><path d="M4 2 11 6 4 11zM20 2 13 6 20 11z" fill="#2834a8"/><path d="M2 14H10V22H2z" fill="#f5dd4d" stroke="#665"/><path d="M14 14 22 22H14z" fill="#c22a2a" stroke="#722"/><path d="M12 1V23" stroke="#333" stroke-dasharray="3 1"/></svg></button>
    <button class="tb" aria-label="装配约束"><svg viewBox="0 0 24 24"><use href="#play" x="-2" y="1"/><path d="M18 2V10M13 10H23M12 21 18 13M16 21 22 13" stroke="#b32b4a" stroke-width="1.500"/></svg></button>
    <i class="sep"></i>
    <button class="tb" aria-label="爆炸图"><svg viewBox="0 0 24 24"><path d="M1 21 4 17 8 12 12 10 15 14 9 16 6 19 5 23z" fill="#e8d164" stroke="#8f7d2a"/><path d="M11 3H17V9H11zM17 8H23V14H17zM11 9H17V14H11z" fill="#f3ea9e" stroke="#6f7130"/></svg></button>
    <button class="tb" aria-label="组件阵列"><svg viewBox="0 0 24 24" class="c-yellow"><use href="#cube" x="1" y="1" width="10" height="11"/><use href="#cube" x="1" y="12" width="10" height="11"/><use href="#cube" x="12" y="12" width="10" height="11"/></svg></button>
    <button class="tb" aria-label="序列"><svg viewBox="0 0 24 24"><path d="M16 2H22V8H16zM10 9H16V15H10z" fill="#fff" stroke="#333"/><path d="M4 16H10V22H4z" fill="#ffe3d2" stroke="#d33c1c" stroke-width="1.500"/></svg></button>
    <i class="sep"></i>
    <button class="tb" aria-label="间隙分析"><svg viewBox="0 0 24 24" class="c-grey"><use href="#cube"/><path d="M2 13 13 15 13 22 2 18z" fill="#f3dc9a" stroke="#8b7437"/><path d="M2 15 13 18" stroke="#8b7437"/></svg></button>
    <i class="sep"></i>
    <button class="tb" aria-label="WAVE"><svg viewBox="0 0 24 24" stroke="#9a8d2c" stroke-width="2"><ellipse cx="9" cy="6" rx="3" ry="5"/><ellipse cx="12" cy="13" rx="3" ry="5"/><ellipse cx="15" cy="18" rx="3" ry="5"/></svg></button>
    <button class="tb" aria-label="关系浏览器"><svg viewBox="0 0 24 24"><path d="M2 9V4H8" stroke="#333"/><path d="M8 2H23V6H8z" fill="#eee" stroke="#555"/><path d="M0 8 2 11 4 8z" fill="#333"/><g stroke="#9a8d2c" stroke-width="2"><ellipse cx="15" cy="13" rx="2" ry="4"/><ellipse cx="18" cy="19" rx="2" ry="4"/></g></svg></button>
    <button class="tb" aria-label="部件间链接"><svg viewBox="0 0 24 24"><path d="M0 12H5L10 4H14M5 12 10 20H13M5 12H14" stroke="#444"/><path d="M14 2H22V6H14zM14 9H22V12H14z" fill="#fff" stroke="#444"/><path d="M13 14H23V24H13z" fill="#dfe2f5" stroke="#27276e"/><path d="M18 16V17M18 18V22" stroke="#27276e" stroke-width="2"/></svg></button>
    <i class="sep"></i>
    <button class="tb" aria-label="产品接口"><svg viewBox="0 0 24 24" class="c-grey"><use href="#cube" x="10" y="1" width="13" height="14"/><use href="#cube" x="1" y="9" width="13" height="14"/></svg></button>
    <button class="dd" aria-label="产品接口列表"></button>
    <button class="dd low" aria-label="工具条选项"></button>
    <i class="grip"></i>
    <button class="tb" aria-label="草图"><svg viewBox="0 0 24 24"><path d="M2 2 18 4V22L2 20z" fill="#f1f1f1" stroke="#444"/><path d="M4 5H9V9H4zM4 12H8V17H4zM10 14 15 15V19L10 18z" stroke="#444"/><path d="M17 1 18 5 23 4 20 8 23 12 18 11 17 15 15 11 11 12 13 8 10 4 15 5z" fill="#f5ee62" stroke="#a8a030"/></svg></button>
    <button class="tb text" disabled><svg viewBox="0 0 24 24"><use href="#flag"/></svg>完成草图</button>
    <button class="tb" aria-label="轮廓"><svg viewBox="0 0 24 24"><path d="M2 2V13Q2 20 7 20 11 20 11 13 11 6 16 6 21 6 21 13V17" stroke="#333"/><g class="dots"><circle cx="2" cy="13" r="2"/><circle cx="11" cy="13" r="2"/><circle cx="21" cy="13" r="2"/></g></svg></button>
    <button class="tb" aria-label="直线"><svg viewBox="0 0 24 24"><path d="M4 20 20 4" stroke="#333"/><g class="dots"><circle cx="4" cy="20" r="2"/><circle cx="20" cy="4" r="2"/></g></svg></button>
    <button class="tb" aria-label="圆弧"><svg viewBox="0 0 24 24"><path d="M3 3Q21 3 21 19" stroke="#333"/><g class="dots"><circle cx="3" cy="3" r="2"/><circle cx="16" cy="7" r="2"/><circle cx="21" cy="19" r="2"/></g></svg></button>
    <button class="tb" aria-label="圆"><svg viewBox="0 0 24 24"><circle cx="12" cy="12" r="10" stroke="#333"/></svg></button>
    <button class="tb" aria-label="圆角"><svg viewBox="0 0 24 24" stroke="#aaa"><path d="M2 2H12Q22 3 22 12V22M14 2H22V10"/></svg></button>
    <button class="tb" aria-label="倒斜角"><svg viewBox="0 0 24 24" stroke="#aaa"><path d="M2 2H12L22 12V22M14 2H22V10"/></svg></button>
    <button class="tb" aria-label="矩形"><svg viewBox="0 0 24 24"><path d="M2 5H21V18H2z" stroke="#333" stroke-width="1.500"/><g class="dots"><circle cx="2" cy="5" r="2"/><circle cx="21" cy="18" r="2"/></g></svg></button>
    <button class="tb" aria-label="艺术样条"><svg viewBox="0 0 24 24"><path d="M3 11 8 4 9 9 17 14 15 20 22 11" stroke="#999"/><path d="M2 12Q6 5 10 11T22 10" stroke="#c33"/><g fill="#888"><circle cx="2" cy="11" r="2"/><circle cx="8" cy="3" r="2"/><circle cx="22" cy="10" r="2"/><circle cx="15" cy="20" r="2"/></g><g class="dots"><circle cx="8" cy="10" r="1.500"/><circle cx="16" cy="14" r="1.500"/></g></svg></button>
    <button class="tb" aria-label="点"><svg viewBox="0 0 24 24"><path d="M12 4V21M4 12H21" stroke="#222" stroke-width="1.500"/></svg></button>
    <button class="tb" aria-label="偏置曲线"><svg viewBox="0 0 24 24" stroke="#aaa"><path d="M2 20V11Q5 3 12 4V9Q21 10 21 15 20 20 17 20H2z"/><path d="M5 17V12Q7 7 9 8V12Q17 12 17 17z"/></svg></button>
    <button class="dd" aria-label="曲线列表"></button>
    <i class="sep"></i>
    <button class="tb" aria-label="快速修剪"><svg viewBox="0 0 24 24" stroke="#aaa"><path d="M5 3 16 22M1 16H12" /><path d="M13 16H23" stroke-dasharray="2 1"/><path d="M12 13 18 5 21 8 15 14z" fill="#ddd"/></svg></button>
    <button class="tb" aria-label="快速延伸"><svg viewBox="0 0 24 24" stroke="#aaa"><path d="M5 3 14 22M1 15H10L20 8"/><path d="M13 12 19 4 22 7 16 14z" fill="#ddd"/></svg></button>
    <button class="tb" aria-label="制作拐角"><svg viewBox="0 0 24 24" stroke="#aaa"><path d="M1 11H15M15 11V22M10 5 20 17"/><path d="M15 1V11H23" stroke-dasharray="2 2"/></svg></button>
    <i class="sep"></i>
    <button class="tb" aria-label="快速尺寸"><svg viewBox="0 0 24 24" stroke="#aaa"><path d="M1 8V20M22 8V20M2 14H21M5 11 2 14 5 17M18 11 21 14 18 17"/><path d="M15 2 8 11H12L7 20 17 9H13L18 3z" fill="#eee"/></svg></button>
    <button class="dd" aria-label="尺寸列表"></button>
    <i class="sep"></i>
    <button class="tb" aria-label="几何约束"><svg viewBox="0 0 24 24" stroke="#aaa"><path d="M2 17 10 7M6 19 14 9M17 12V21M12 21H22"/></svg></button>
    <button class="tb" aria-label="对称"><svg viewBox="0 0 24 24" stroke="#999"><path d="M5 3H2V21H5M19 3H22V21H19" stroke-width="1.500"/><path d="M8 2V8M16 2V8M6 5H10M14 5H18"/><path d="M12 1V22" stroke-dasharray="3 1"/></svg></button>
    <button class="tb" aria-label="显示约束"><svg viewBox="0 0 24 24" stroke="#aaa"><path d="M1 7V16L6 12z" fill="#aaa"/><path d="M8 13 18 2M12 16 22 4M17 13V22M12 22H22"/></svg></button>
    <button class="dd" aria-label="约束列表"></button>
    <i class="sep"></i>
    <button class="tb" aria-label="转换"><svg viewBox="0 0 24 24" stroke="#888"><path d="M2 2H11V10H2zM2 16H8V23H2zM10 13H22V22H10z" fill="#f4f4f4"/><path d="M13 15 19 5M17 5H22V9"/></svg></button>
    <button class="tb" aria-label="备选解"><svg viewBox="0 0 24 24" stroke="#aaa"><path d="M20 3Q5 2 8 8T23 12M20 7Q13 6 13 8" stroke-width="2"/><path d="M7 16H23V22H7z" fill="#ccc"/></svg></button>
  </div>

  <div class="statusbar"><svg viewBox="0 0 24 24"><use href="#flag"/></svg></div>

  <footer class="taskbar">
    <button class="launch" aria-label="Internet Explorer"><svg viewBox="0 0 32 32"><path d="M29 20Q25 29 16 29 5 28 5 17 6 5 17 5 29 6 29 18H12Q12 24 17 24 20 24 22 20zM12 14H22Q21 9 17 9 13 9 12 14z" fill="#5cc4f4" stroke="#1f7fc0"/><path d="M3 30Q-1 24 12 12 25 1 30 4 32 6 28 13 29 7 25 7 16 8 8 18 2 26 6 29z" fill="#f5c83a" stroke="#c89420" stroke-width=".5"/></svg></button>
    <button class="task"><svg viewBox="0 0 32 32"><path d="M5 2 14 4V28L7 31 5 29z" fill="url(#g-folder)" stroke="#c9a84d"/><path d="M14 4H25V22L27 27 20 29 14 28z" fill="url(#g-folder)" stroke="#c9a84d"/><path d="M7 5 18 9V31L7 29z" fill="#f8e596" stroke="#d3b558"/></svg><span>E:\其他项目\毕业...</span></button>
    <button class="launch browser" aria-label="浏览器"><svg viewBox="0 0 32 32"><circle cx="16" cy="16" r="13" fill="#4cb82d" stroke="#e9f7e0" stroke-width="2"/><path d="M24 20Q21 25 16 25 8 24 8 16 9 8 16 8 25 9 24 17H12Q13 21 17 21 19 21 20 20zM12 14H20Q19 11 16 11 13 11 12 14z" fill="#fff"/><path d="M3 26Q14 25 29 9 20 24 8 28z" fill="#c5eba8"/></svg></button>
    <button class="task cad"><svg viewBox="0 0 32 32"><path d="M1 1H31V31H1z" fill="#177f72" stroke="#fff"/><path d="M3 22 10 4H15L22 22H17L15 17H9L7 22zM11 13H14L12 8z" fill="#fff"/><path d="M4 24 22 24 18 29H9z" fill="#bfe5df"/><path d="M23 2V18M23 25V30M26 22H31M4 22H19" stroke="#e8fffb"/><path d="M20 19H26V25H20z" fill="#177f72" stroke="#fff" stroke-width="2"/></svg><span>AutoCAD 2008 -...</span></button>
    <button class="task active"><svg viewBox="0 0 32 32"><circle cx="16" cy="18" r="12" fill="#1d9fe0" stroke="#0d5caa"/><path d="M8 12Q14 7 19 13 23 19 16 22 9 28 6 20z" fill="#2ad0d0"/><path d="M3 27Q16 30 27 17 32 8 26 10 35 5 30 16 22 31 4 30z" fill="#f5b42c" stroke="#c98414" stroke-width=".5"/><path d="M3 4 16 2 14 17z" fill="#d81e3c" stroke="#8e1028"/><path d="M16 2 14 17 18 13z" fill="#8e1028"/></svg><span>NX 10 - 建模 - [...</span></button>
    <div class="tray">
      <svg viewBox="0 0 16 16"><path d="M1 4H15V12H1z" fill="#d9dee6" stroke="#555"/><path d="M3 6H13M3 8H13M4 10H12" stroke="#555" stroke-dasharray="1 1"/></svg>
      <svg viewBox="0 0 16 16" class="apart"><path d="M5 2Q15 0 15 9 13 16 5 14L2 10z" fill="#f5d34a" stroke="#dfeaf5"/><path d="M3 6 8 8 6 12 2 11z" fill="#fff"/><path d="M8 10Q11 12 12 8" stroke="#a0620e"/></svg>
      <svg viewBox="0 0 16 16"><path d="M1 2H13V5H15V11H13V14H1z" fill="#28d040" stroke="#1a8a30"/><path d="M3 3 5 12 8 5 10 12 13 5M2 8H14" stroke="#281b7a" stroke-width="2"/></svg>
      <svg viewBox="0 0 16 16"><path d="M0 12H2V14H0zM3 10H5V14H3zM6 8H8V14H6zM9 6H11V14H9zM12 3H15V14H12z" fill="#fff"/></svg>
      <svg viewBox="0 0 16 16" stroke="#fff"><path d="M2 3H7V14H2zM3 1H6V3H3z" fill="#5d6f86" stroke-width="1.500"/><path d="M8 5H14V8Q14 11 11 11T8 8zM9 2V5M13 2V5M11 11V14H8" fill="#5d6f86" stroke-width="1.500"/></svg>
      <svg viewBox="0 0 16 16" stroke="#fff"><path d="M1 6H3L7 2V14L3 10H1z" fill="#7e92a8"/><path d="M9 6Q10 8 9 10M11 4Q14 8 11 12M13 2Q17 8 13 14"/></svg>
    </div>
    <time class="clock"><span>上午</span><span>2022/6/1</span></time>
  </footer>

</body>
</html>
```
FILE: styles.css
```css
* { box-sizing: border-box; }
body {
  margin: 0;
  height: 100vh;
  display: flex;
  flex-direction: column;
  overflow: hidden;
  background: #fdfdfd;
  color: #222;
  font-family: "Open Sans", "Noto Sans CJK SC", sans-serif;
  font-size: 12px;
}
button, input, select {
  font: inherit;
  color: inherit;
}
button {
  border: 0;
  padding: 0;
  background: none;
}
svg { fill: none; flex: none; }
.defs {
  position: absolute;
  width: 0;
  height: 0;
}

/* cube colours */
.face-t { fill: var(--t); stroke: var(--s); }
.face-l { fill: var(--l); stroke: var(--s); }
.face-r { fill: var(--r); stroke: var(--s); }
.c-blue { --t: #dbe4fb; --l: #a5b9ee; --r: #6f86d6; --s: #3f4d9c; }
.c-solid { --t: #b4c4f5; --l: #8499e6; --r: #5266c4; --s: #4452a0; }
.c-sky { --t: #d5ecfc; --l: #8cbcf0; --r: #5b92da; --s: #6a93c4; }
.c-gold { --t: #fde0a8; --l: #f5a84a; --r: #de7f26; --s: #b9682a; }
.c-sync { --t: #cfa3e2; --l: #fbb347; --r: #e0b4e2; --s: #9c5a94; }
.c-pink { --t: #e3c2ee; --l: #f6cfc3; --r: #dfb6e4; --s: #a86fa4; }
.c-yellow { --t: #fdf0b0; --l: #f0cd62; --r: #d9a93a; --s: #a8822e; }
.c-grey { --t: #f2f2f2; --l: #d5d5d5; --r: #a4a4a4; --s: #555; }
.dots { fill: #d33a3a; stroke: #8a2323; }

.titlebar {
  flex: none;
  height: 26px;
  display: flex;
  align-items: center;
  justify-content: space-between;
  padding: 0 20px 0 1px;
}
.titlebar h1 {
  margin: 0;
  font-size: 12px;
  font-weight: normal;
  white-space: nowrap;
}
.brand {
  color: #0a8a80;
  font-family: "DejaVu Sans", sans-serif;
  font-size: 12px;
  font-weight: bold;
}

.menubar {
  flex: none;
  height: 27px;
  display: flex;
  align-items: center;
  gap: 15px;
  padding: 0 0 4px 11px;
  background: #c4d5d2;
  font-size: 11px;
}
.menubar a {
  color: #222;
  text-decoration: none;
  white-space: nowrap;
}
.menubar .wide { margin-left: 4px; }

.toolbar {
  flex: none;
  display: flex;
  align-items: center;
  overflow: hidden;
  font-size: 11px;
}
.toolbar > * { flex: none; }
.standard {
  height: 34px;
  margin-left: -8px;
  border-bottom: 1px solid #ddd;
}
.feature {
  height: 34px;
  margin-left: -19px;
  border-bottom: 1px solid #ddd;
}
.selection {
  height: 31px;
}
.assembly {
  height: 35px;
  margin-left: -18px;
  border-bottom: 1px solid #bbb;
}
.tb {
  width: 31px;
  height: 26px;
  display: flex;
  align-items: center;
  justify-content: center;
}
.tb svg {
  width: 24px;
  height: 24px;
}
.tb.text {
  width: 80px;
  justify-content: flex-start;
  gap: 4px;
  padding-left: 3px;
  color: #aaa;
  white-space: nowrap;
}
.selection .tb {
  width: 23px;
  height: 22px;
}
.selection .tb svg {
  width: 22px;
  height: 22px;
}
.selection .slim { width: 19px; }
.selection .on {
  background: #c4d5d2;
  border: 1px solid #a9bcb9;
}
.selection .on svg {
  width: 20px;
  height: 20px;
}
.dd {
  width: 12px;
  height: 24px;
  display: flex;
  align-items: center;
  justify-content: center;
}
.dd::before {
  content: "";
  border: 3px solid transparent;
  border-top-color: #111;
  border-bottom: 0;
}
.dd.low {
  align-items: flex-end;
  padding-bottom: 3px;
}
.assembly .low { width: 8px; }
.sep {
  width: 6px;
  height: 26px;
  border-left: 1px solid #ccc;
  margin: 0 -2px 0 2px;
}
.grip {
  width: 8px;
  height: 32px;
  border-left: 1px solid #ccc;
  margin-left: 2px;
  background: radial-gradient(circle, #999 1px, transparent 1px) 1px 2px / 4px 4px repeat-y;
}
.edge {
  height: 34px;
  border-left: 1px solid #ccc;
  margin-left: 2px;
}
.finder {
  width: 125px;
  height: 20px;
  display: flex;
  align-items: center;
  margin: 0 4px 0 5px;
  border: 1px solid #999;
  background: #fff;
}
.finder input {
  flex: 1;
  min-width: 0;
  border: 0;
  padding: 0 0 0 1px;
  background: none;
}
.finder svg {
  width: 16px;
  height: 16px;
}

.combo { position: relative; }
.combo select {
  width: 100%;
  height: 20px;
  appearance: none;
  border: 1px solid #999;
  border-radius: 0;
  background: #fff;
  padding: 0 16px 0 3px;
}
.combo::after {
  content: "";
  position: absolute;
  right: 6px;
  top: 8px;
  border: 4px solid transparent;
  border-top-color: #111;
  border-bottom: 0;
  pointer-events: none;
}
.filter {
  width: 78px;
  margin-left: -8px;
}
.scope { width: 140px; margin: 0 4px 0 7px; }

.workspace {
  flex: 1;
  min-height: 0;
  display: flex;
  border-top: 1px solid #8d8d8f;
}
.navigator {
  flex: none;
  width: 202px;
  display: flex;
  flex-direction: column;
  padding-right: 10px;
  border-right: 1px solid #6f7173;
  overflow: hidden;
}
.nav-title {
  height: 29px;
  display: flex;
  align-items: center;
  justify-content: space-between;
  padding-right: 6px;
}
.nav-title h2 {
  margin: 0 0 0 -2px;
  font-size: 12px;
  font-weight: normal;
}
.pin {
  width: 12px;
  height: 11px;
  border: 1px solid #111;
  border-top-width: 2px;
}
.tree {
  flex: 1;
  min-height: 0;
  display: flex;
  flex-direction: column;
  justify-content: space-between;
  border-right: 1px solid #ccc;
  border-bottom: 4px solid #c9cccd;
  padding-bottom: 3px;
}
.tree table {
  width: 100%;
  table-layout: fixed;
  border-collapse: collapse;
}
.tree th {
  height: 21px;
  padding: 0;
  background: #eceded;
  border-top: 1px solid #ccc;
  border-bottom: 1px solid #ccc;
  font-weight: normal;
  text-align: left;
  white-space: nowrap;
}
.tree th + th, .tree td + td {
  width: 20px;
  border-left: 1px solid #ddd;
}
.tree th + th { padding-left: 6px; }
.tree td {
  height: 20px;
  padding: 0;
  border-bottom: 1px solid #e6e6e8;
}
.tree tbody tr:nth-child(even) { background: #f6f6f7; }
.col-name { margin-left: -9px; }
.sort {
  display: inline-block;
  margin: 0 0 2px 17px;
  border: 5px solid transparent;
  border-bottom-color: #111;
  border-top: 0;
}
.node {
  height: 19px;
  display: flex;
  align-items: center;
  white-space: nowrap;
}
.node svg {
  width: 15px;
  height: 15px;
}
.top { margin-left: -9px; gap: 4px; }
.cam { margin-left: -7px; gap: 3px; }
.cam svg:first-child { width: 12px; height: 12px; }
.leaf {
  gap: 3px;
  margin-left: 1px;
  border-left: 1px dotted #b58;
}
.leaf::before {
  content: "";
  width: 7px;
  border-top: 1px dotted #b58;
}
.leaf input {
  appearance: none;
  width: 12px;
  height: 12px;
  margin: 0;
  border: 1px solid #222;
  background: #fff;
  display: flex;
}
.leaf input:checked::before {
  content: "";
  width: 100%;
  background: #1fbf4a;
  clip-path: polygon(0 45%, 25% 35%, 42% 60%, 80% 0, 100% 0, 50% 100%, 35% 100%);
}
.warn::before { margin-right: -7px; }
.node .alert {
  width: 11px;
  height: 12px;
  margin: -4px -7px 0 0;
}
.bold { font-weight: bold; }
.ok {
  display: block;
  width: 12px;
  height: 12px;
  margin-left: 6px;
}
.hscroll {
  flex: none;
  height: 16px;
  display: flex;
  align-items: center;
  justify-content: space-between;
  background: #e9eaea;
  padding-right: 7px;
}
.thumb {
  width: 88px;
  height: 15px;
  display: flex;
  align-items: center;
  padding-left: 34px;
  border: 1px solid #999;
  border-left: 0;
  background: linear-gradient(#f1f1f1, #c5c6c8);
}
.thumb svg {
  width: 9px;
  height: 7px;
}
.right {
  border: 4px solid transparent;
  border-left: 4px solid #333;
  border-right: 0;
}
.sections { padding-bottom: 6px; }
.section {
  width: 100%;
  height: 24px;
  display: flex;
  align-items: center;
  justify-content: space-between;
  padding: 3px 5px 0 0;
  border-bottom: 2px solid #cdd0d1;
  color: #2b7f9c;
}
.section span { margin-left: -5px; }
.short span { margin-left: -7px; }
.section svg {
  width: 12px;
  height: 12px;
  stroke: #2b7f9c;
  stroke-width: 2;
}

.viewport {
  flex: 1;
  min-width: 0;
  background: linear-gradient(#b3b5b6, #d2d4d5 50%, #e8ebec);
}
.viewport svg {
  display: block;
  width: 100%;
  height: 100%;
}

.statusbar {
  flex: none;
  height: 21px;
  display: flex;
  align-items: center;
  justify-content: flex-end;
  padding-right: 5px;
  border-right: 1px dashed #888;
}
.statusbar svg {
  width: 16px;
  height: 16px;
}

.taskbar {
  flex: none;
  height: 40px;
  display: flex;
  align-items: stretch;
  background: #7e92a8;
  border-top: 1px solid #2c425a;
  box-shadow: inset 0 1px #aab8c6;
  color: #fff;
  overflow: hidden;
}
.launch {
  width: 53px;
  padding-right: 10px;
}
.launch svg {
  width: 32px;
  height: 32px;
  display: block;
  margin: 0 auto;
}
.browser {
  width: 65px;
  padding: 0 2px 0 0;
}
.task {
  width: 160px;
  margin-right: 2px;
  display: flex;
  align-items: center;
  gap: 4px;
  padding: 0 7px;
  border: 1px solid #34485f;
  border-radius: 2px;
  background: linear-gradient(160deg, #a9b5c4, #8595aa 50%, #7688a0);
  box-shadow: inset 0 0 0 1px #b4c0cd;
  white-space: nowrap;
}
.task svg {
  width: 32px;
  height: 32px;
}
.task:nth-of-type(2) { margin-right: 0; gap: 7px; }
.task.active { background: linear-gradient(160deg, #dbe1e8, #b2bdca 45%, #a5b2c2); }
.tray {
  margin-left: auto;
  display: flex;
  align-items: center;
  gap: 8px;
}
.tray svg {
  width: 16px;
  height: 16px;
}
.tray .apart { margin-left: 7px; }
.clock {
  width: 52px;
  margin-left: 16px;
  display: flex;
  flex-direction: column;
  justify-content: center;
  line-height: 17px;
  white-space: nowrap;
}
.clock span:first-child { padding-left: 22px; }
```
